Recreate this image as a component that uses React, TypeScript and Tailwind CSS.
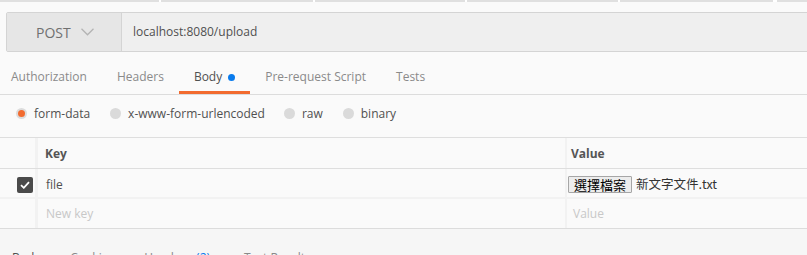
import React from "react";

const font = { fontFamily: '"Open Sans", "Noto Sans", sans-serif' };

function Radio({ checked }: { checked?: boolean }) {
  return (
    <span
      className={
        "w-[11px] h-[11px] rounded-full flex items-center justify-center shrink-0 " +
        (checked ? "bg-[#dcdcdc]" : "bg-[#dadada]")
      }
    >
      {checked && <span className="w-[7px] h-[7px] rounded-full bg-[#f26b2f]" />}
    </span>
  );
}

export default function App() {
  return (
    <div
      className="w-[807px] h-[255px] overflow-hidden bg-[#fafafa] text-[12px] text-[#505050] relative"
      style={font}
    >
      {/* top strip */}
      <div className="flex h-[2px] bg-[#e0e0e0]">
        <div className="w-[159px]" />
        <div className="w-[2px] bg-white" />
        <div className="w-[152px]" />
        <div className="w-[2px] bg-white" />
        <div className="w-[150px]" />
        <div className="w-[2px] bg-white" />
        <div className="w-[151px]" />
        <div className="w-[2px] bg-white" />
        <div className="w-[153px]" />
        <div className="w-[4px] bg-white" />
      </div>

      {/* request bar */}
      <div className="mt-[10px] ml-[6px] w-[820px] h-[40px] flex border border-[#d4d4d4] rounded-[2px] bg-[#efefef]">
        <div className="w-[115px] h-full bg-[#e6e6e6] border-r border-[#d4d4d4] flex items-center pl-[29px]">
          <span className="text-[14px] text-[#707070]">POST</span>
          <svg className="ml-[10px]" width="13" height="8" viewBox="0 0 13 8" fill="none">
            <path d="M0.5 0.8 L6.5 6.8 L12.5 0.8" stroke="#b4b4b4" strokeWidth="1.3" />
          </svg>
        </div>
        <div className="flex items-center pl-[11px] text-[#505050]">localhost:8080/upload</div>
      </div>

      {/* tabs */}
      <div className="h-[43px] flex items-end border-b border-[#dcdcdc] ml-[-4px]">
        <div className="px-[15px] h-full flex items-center text-[#8a8a8a] pt-[8px]">Authorization</div>
        <div className="px-[15px] h-full flex items-center text-[#8a8a8a] pt-[8px]">Headers</div>
        <div className="px-[15px] h-full flex items-center text-[#505050] relative pt-[8px]">
          Body
          <span className="ml-[6px] w-[7px] h-[7px] rounded-full bg-[#097bed]" />
          <span className="absolute left-0 right-0 bottom-0 h-[3px] bg-[#f26b2f]" />
        </div>
        <div className="px-[15px] h-full flex items-center text-[#8a8a8a] pt-[8px]">Pre-request Script</div>
        <div className="px-[15px] h-full flex items-center text-[#8a8a8a] pt-[8px]">Tests</div>
      </div>

      {/* radios */}
      <div className="h-[42px] flex items-center pl-[16px] pb-[5px]">
        <div className="flex items-center gap-[7px] mr-[20px]">
          <Radio checked />
          <span>form-data</span>
        </div>
        <div className="flex items-center gap-[7px] mr-[19px]">
          <Radio />
          <span>x-www-form-urlencoded</span>
        </div>
        <div className="flex items-center gap-[7px] mr-[20px]">
          <Radio />
          <span>raw</span>
        </div>
        <div className="flex items-center gap-[7px]">
          <Radio />
          <span>binary</span>
        </div>
      </div>

      {/* table */}
      <div className="border-t border-[#dedede]">
        <div className="h-[31px] flex border-b border-[#dedede]">
          <div className="w-[35px]" />
          <div className="w-[3px] bg-[#f2f2f2]" />
          <div className="w-[527px] flex items-center pl-[7px] pt-[1px] font-bold text-[#555]">Key</div>
          <div className="w-[2px] bg-[#f2f2f2]" />
          <div className="flex-1 flex items-center pl-[4px] pt-[1px] font-bold text-[#555]">Value</div>
        </div>
        <div className="h-[30px] flex border-b-2 border-[#f2f2f2]">
          <div className="w-[35px] flex items-center pl-[17px] pt-[3px]">
            <span className="w-[16px] h-[16px] shrink-0 rounded-[2px] bg-[#4a4a4a] flex items-center justify-center">
              <svg width="10" height="8" viewBox="0 0 10 8" fill="none">
                <path d="M1 4.2 L3.8 6.8 L9 1.2" stroke="white" strokeWidth="1.8" />
              </svg>
            </span>
          </div>
          <div className="w-[3px] bg-[#f2f2f2]" />
          <div className="w-[527px] flex items-center pl-[8px] pt-[4px]">file</div>
          <div className="w-[2px] bg-[#f2f2f2]" />
          <div className="flex-1 flex items-center pl-[1px] pt-[3px]">
            <span
              className="h-[17px] w-[64px] flex items-center justify-center border border-[#a6a6a6] bg-[#ededed] rounded-[1px] text-[13px] text-black"
              style={{ fontFamily: '"Noto Sans CJK TC", sans-serif' }}
            >
              選擇檔案
            </span>
            <span
              className="ml-[4px] text-[12.5px] text-[#333]"
              style={{ fontFamily: '"Noto Sans CJK TC", sans-serif' }}
            >
              新文字文件.txt
            </span>
          </div>
        </div>
        <div className="h-[30px] flex border-b border-[#dcdcdc]">
          <div className="w-[35px]" />
          <div className="w-[3px] bg-[#f2f2f2]" />
          <div className="w-[527px] flex items-center pl-[8px] pt-[1px] text-[#c8c8c8]">New key</div>
          <div className="w-[2px] bg-[#f2f2f2]" />
          <div className="flex-1 flex items-center pl-[6px] pt-[1px] text-[#c8c8c8]">Value</div>
        </div>
      </div>

      {/* bottom tabs */}
      <div className="bg-[#f6f6f6] h-[40px] flex pt-[20px] pl-[12px]">
        <span className="text-[#505050]">Body</span>
        <span className="ml-[30px] text-[#8a8a8a]">Cookies</span>
        <span className="ml-[30px] text-[#8a8a8a]">Headers</span>
        <span className="ml-[5px] text-[#097bed]">(2)</span>
        <span className="ml-[34px] text-[#8a8a8a]">Test Results</span>
      </div>
    </div>
  );
}
